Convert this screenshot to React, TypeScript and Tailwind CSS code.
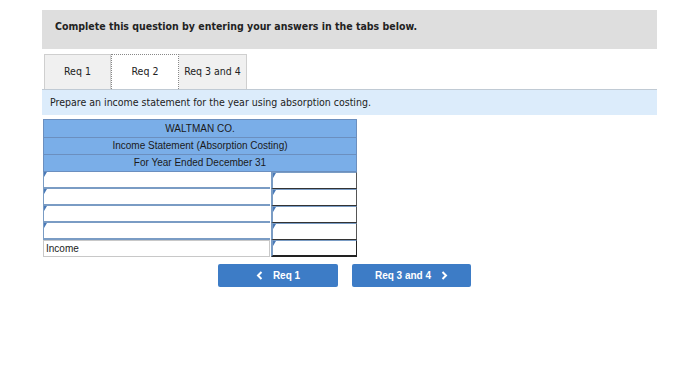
import React from "react";

const verdana = { fontFamily: '"DejaVu Sans Condensed", "DejaVu Sans", Tahoma, sans-serif' };
const arial = { fontFamily: '"Liberation Sans", Arial, sans-serif' };

function Flag() {
  return (
    <span className="absolute left-0 top-0 w-0 h-0 border-t-[5px] border-t-[#4a7ab8] border-r-[3px] border-r-transparent" />
  );
}

function InputRow({ label, last }: { label?: string; last?: boolean }) {
  return (
    <div className="flex h-[17px]">
      <div
        className={
          label
            ? "relative w-[227px] border border-[#c8c8c8] bg-white text-[10px] text-[#222] leading-[15px] pl-[2px]"
            : "relative w-[227px] border-b-2 border-[#7a9cc4] bg-white"
        }
      >
        {!label && <Flag />}
        {label}
      </div>
      <div
        className={
          "relative w-[86px] ml-[1px] bg-white border border-l-2 border-[#7a9cc4] " +
          (last ? "border-b-2 border-b-[#222] border-r-[#222]" : "border-b-[#333] border-r-[#555]")
        }
      >
        <Flag />
      </div>
    </div>
  );
}

export default function App() {
  return (
    <div className="w-[700px] h-[366px] bg-white overflow-hidden">
      <div className="pt-[10px] ml-[42px] w-[615px]">
        {/* Prompt banner */}
        <div
          className="h-[39px] bg-[#dedede] pt-[9px] pl-[13px] text-[10.5px] leading-[14px] font-bold text-[#222]"
          style={verdana}
        >
          Complete this question by entering your answers in the tabs below.
        </div>

        {/* Tabs */}
        <div className="flex pt-[5px] pl-[2px]" style={verdana}>
          <div className="w-[67px] h-[35px] bg-[#f0f0f0] border border-[#cfcfcf] border-b-0 flex items-center justify-center text-[10.5px] text-[#222]">
            Req 1
          </div>
          <div className="w-[68px] h-[35px] bg-white border border-dotted border-[#888] border-b-0 flex items-center justify-center text-[10.5px] text-[#222]">
            Req 2
          </div>
          <div className="w-[68px] h-[35px] bg-[#f0f0f0] border border-[#cfcfcf] border-b-0 border-l-0 flex items-center justify-center text-[10.5px] text-[#222]">
            Req 3 and 4
          </div>
        </div>

        {/* Instruction */}
        <div
          className="h-[26px] bg-[#dcecfb] border-t border-[#c0cad4] flex items-center pl-[8px] text-[10.5px] text-[#222]"
          style={verdana}
        >
          Prepare an income statement for the year using absorption costing.
        </div>

        {/* Statement table */}
        <div className="mt-[4px] ml-[1px] w-[314px]" style={arial}>
          <div className="border border-[#6b8fbf] bg-[#7aaee8] text-[10px] text-[#1a1a1a] text-center">
            <div className="h-[18px] leading-[17px] border-b border-[#6b8fbf]">WALTMAN CO.</div>
            <div className="h-[17px] leading-[16px] border-b border-[#6b8fbf]">Income Statement (Absorption Costing)</div>
            <div className="h-[16px] leading-[16px]">For Year Ended December 31</div>
          </div>
          <div className="border-l border-[#7a9cc4]">
            <InputRow />
            <InputRow />
            <InputRow />
            <InputRow />
          </div>
          <InputRow label="Income" last />
        </div>

        {/* Navigation buttons */}
        <div className="flex mt-[7px] ml-[176px] gap-[14px]" style={arial}>
          <div className="w-[120px] h-[23px] bg-[#3d7cc6] rounded-[2px] flex items-center justify-center gap-[10px] text-white text-[10px] font-bold">
            <svg width="7" height="9" viewBox="0 0 7 9">
              <path d="M5.5 1 L2 4.5 L5.5 8" stroke="white" strokeWidth="2" fill="none" />
            </svg>
            <span>Req 1</span>
          </div>
          <div className="w-[119px] h-[23px] bg-[#3d7cc6] rounded-[2px] flex items-center justify-center gap-[10px] text-white text-[10px] font-bold">
            <span>Req 3 and 4</span>
            <svg width="7" height="9" viewBox="0 0 7 9">
              <path d="M1.5 1 L5 4.5 L1.5 8" stroke="white" strokeWidth="2" fill="none" />
            </svg>
          </div>
        </div>
      </div>
    </div>
  );
}
